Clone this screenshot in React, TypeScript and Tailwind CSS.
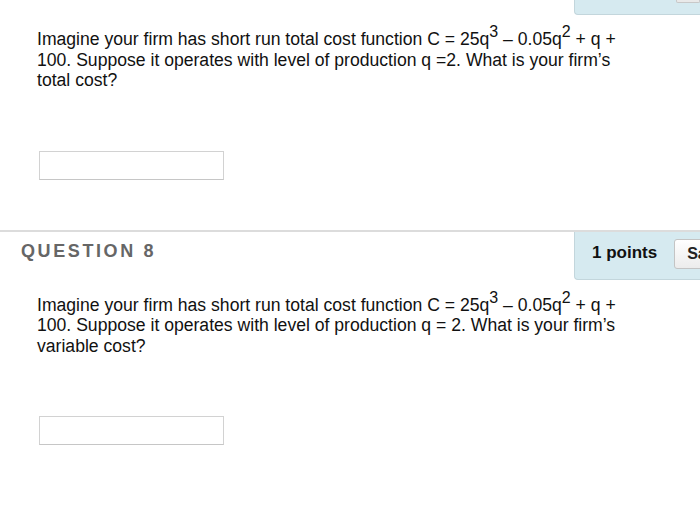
import React from "react";

function Sup({ children }: { children: React.ReactNode }) {
  return <sup className="text-[16px] top-[-0.5em]">{children}</sup>;
}

function FirstLine() {
  return (
    <>
      Imagine your firm has short run total cost function C = 25q<Sup>3</Sup> – 0.05q<Sup>2</Sup> + q +
    </>
  );
}

function AnswerBox() {
  return <div className="ml-[39px] w-[185px] h-[29px] border border-[#d2d2d2] border-b-[#c6c6c6] bg-white" />;
}

export default function App() {
  return (
    <div className="w-[700px] h-[506px] bg-white overflow-hidden font-['Liberation_Sans',Arial,sans-serif] text-[#111]">
      {/* top strip: remainder of previous points box */}
      <div className="flex justify-end h-[15px]">
        <div className="w-[126px] h-[15px] bg-[#d6eaf0] border-l border-b border-[#c3d6dc] rounded-bl-[4px] pl-[101px]">
          <div className="h-[3px] bg-[#e9e9e9] border-x border-b border-[#c8c8c8] rounded-b-[2px]" />
        </div>
      </div>

      {/* Question 7 body */}
      <div className="pt-[14px] pl-[37px] text-[17.6px] leading-[20.5px]">
        <FirstLine />
        <br />
        100. Suppose it operates with level of production q =2. What is your firm’s
        <br />
        total cost?
      </div>
      <div className="mt-[60px]">
        <AnswerBox />
      </div>

      {/* Question 8 header */}
      <div className="mt-[50px] border-t-2 border-[#dcdcdc] flex">
        <div className="flex-1 pt-[8px] pl-[21px] text-[18px] leading-[22px] font-bold tracking-[2.6px] text-[#666]">
          QUESTION 8
        </div>
        <div className="w-[126px] h-[48px] bg-[#d6eaf0] border-l border-b border-[#c3d6dc] rounded-bl-[4px] flex items-start overflow-hidden">
          <div className="mt-[11px] ml-[17px] text-[17px] leading-[20px] font-bold text-[#111] whitespace-nowrap">
            1 points
          </div>
          <div className="mt-[7px] ml-[17px] h-[30px] shrink-0 px-[12px] border border-[#c4c4c4] rounded-[3px] bg-gradient-to-b from-white to-[#ececec] text-[16px] leading-[28px] font-bold text-[#222] whitespace-nowrap">
            Save
          </div>
        </div>
      </div>

      {/* Question 8 body */}
      <div className="pt-[15px] pl-[37px] text-[17.6px] leading-[20.5px]">
        <FirstLine />
        <br />
        100. Suppose it operates with level of production q = 2. What is your firm’s
        <br />
        variable cost?
      </div>
      <div className="mt-[60px]">
        <AnswerBox />
      </div>
    </div>
  );
}
